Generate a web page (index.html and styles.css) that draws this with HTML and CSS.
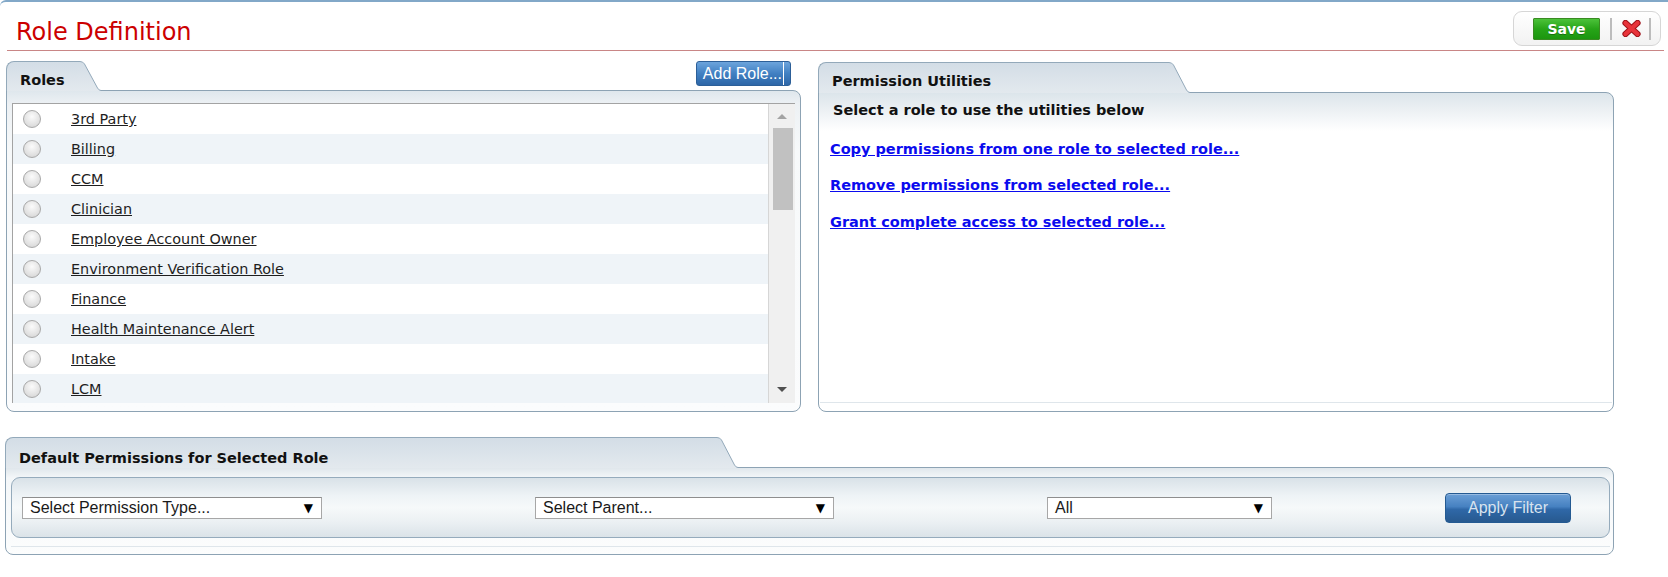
FILE: index.html
```html
<!DOCTYPE html>
<html lang="en">
<head>
<meta charset="utf-8">
<title>Role Definition</title>
<link rel="stylesheet" href="styles.css">
</head>
<body>
<div class="page">
  <header class="header">
    <h1 class="title">Role Definition</h1>
    <div class="toolbar">
      <button class="btn-save" type="button">Save</button>
      <span class="tool-sep"></span>
      <button class="btn-cancel" type="button" aria-label="Cancel">
        <svg width="19" height="17" viewBox="0 0 19 17">
          <path d="M3.5 3 L15.5 14 M15.5 3 L3.5 14" stroke="#9e1219" stroke-width="6.2" stroke-linecap="round" fill="none"/>
          <path d="M3.5 3 L15.5 14 M15.5 3 L3.5 14" stroke="#e8343b" stroke-width="4.2" stroke-linecap="round" fill="none"/>
        </svg>
      </button>
      <span class="tool-sep tool-sep-last"></span>
    </div>
  </header>

  <div class="top-row">
    <section class="panel panel-roles">
      <div class="panel-head">
        <div class="tab tab-roles">
          <span class="tab-label">Roles</span>
          <svg class="tab-slant" width="24" height="30" viewBox="0 0 24 30">
            <defs><linearGradient id="tg1" x1="0" y1="0" x2="0" y2="1"><stop offset="0" stop-color="#d3dde6"/><stop offset="1" stop-color="#e3e9ee"/></linearGradient></defs>
            <path d="M0 30 L0 0.5 L3 0.5 Q6 0.5 7.5 3 L20.5 27 Q22 29.5 24 29.5 L24 30 Z" fill="url(#tg1)"/>
            <path d="M0 0.5 L3 0.5 Q6 0.5 7.5 3 L20.5 27 Q22 29.5 24 29.5" fill="none" stroke="#93a9ba" stroke-width="1"/>
          </svg>
        </div>
        <button class="btn-add" type="button">Add Role...</button>
      </div>
      <div class="panel-body roles-body">
        <div class="listbox">
          <ul class="role-list">
            <li class="role"><span class="radio"></span><a class="role-link" href="#">3rd Party</a></li>
            <li class="role"><span class="radio"></span><a class="role-link" href="#">Billing</a></li>
            <li class="role"><span class="radio"></span><a class="role-link" href="#">CCM</a></li>
            <li class="role"><span class="radio"></span><a class="role-link" href="#">Clinician</a></li>
            <li class="role"><span class="radio"></span><a class="role-link" href="#">Employee Account Owner</a></li>
            <li class="role"><span class="radio"></span><a class="role-link" href="#">Environment Verification Role</a></li>
            <li class="role"><span class="radio"></span><a class="role-link" href="#">Finance</a></li>
            <li class="role"><span class="radio"></span><a class="role-link" href="#">Health Maintenance Alert</a></li>
            <li class="role"><span class="radio"></span><a class="role-link" href="#">Intake</a></li>
            <li class="role"><span class="radio"></span><a class="role-link" href="#">LCM</a></li>
          </ul>
          <div class="scrollbar">
            <span class="sb-btn sb-btn-up"></span>
            <span class="sb-thumb"></span>
            <span class="sb-btn sb-btn-down"></span>
          </div>
        </div>
      </div>
    </section>

    <section class="panel panel-perms">
      <div class="panel-head">
        <div class="tab tab-perms">
          <span class="tab-label">Permission Utilities</span>
          <svg class="tab-slant" width="24" height="31" viewBox="0 0 24 31">
            <defs><linearGradient id="tg2" x1="0" y1="0" x2="0" y2="1"><stop offset="0" stop-color="#d3dde6"/><stop offset="1" stop-color="#e3e9ee"/></linearGradient></defs>
            <path d="M0 31 L0 0.5 L3 0.5 Q6 0.5 7.5 3 L20.5 28 Q22 30.5 24 30.5 L24 31 Z" fill="url(#tg2)"/>
            <path d="M0 0.5 L3 0.5 Q6 0.5 7.5 3 L20.5 28 Q22 30.5 24 30.5" fill="none" stroke="#93a9ba" stroke-width="1"/>
          </svg>
        </div>
      </div>
      <div class="panel-body perms-body">
        <p class="perm-hint">Select a role to use the utilities below</p>
        <div class="perm-links">
          <a class="perm-link" href="#">Copy permissions from one role to selected role...</a>
          <a class="perm-link" href="#">Remove permissions from selected role...</a>
          <a class="perm-link" href="#">Grant complete access to selected role...</a>
        </div>
        <div class="panel-foot"></div>
      </div>
    </section>
  </div>

  <section class="panel panel-defaults">
    <div class="panel-head">
      <div class="tab tab-defaults">
        <span class="tab-label">Default Permissions for Selected Role</span>
        <svg class="tab-slant" width="24" height="31" viewBox="0 0 24 31">
          <defs><linearGradient id="tg3" x1="0" y1="0" x2="0" y2="1"><stop offset="0" stop-color="#d3dde6"/><stop offset="1" stop-color="#e3e9ee"/></linearGradient></defs>
          <path d="M0 31 L0 0.5 L3 0.5 Q6 0.5 7.5 3 L20.5 28 Q22 30.5 24 30.5 L24 31 Z" fill="url(#tg3)"/>
          <path d="M0 0.5 L3 0.5 Q6 0.5 7.5 3 L20.5 28 Q22 30.5 24 30.5" fill="none" stroke="#93a9ba" stroke-width="1"/>
        </svg>
      </div>
    </div>
    <div class="panel-body defaults-body">
      <div class="filter-bar">
        <div class="select select-type"><span>Select Permission Type...</span><span class="select-arrow">▼</span></div>
        <div class="select select-parent"><span>Select Parent...</span><span class="select-arrow">▼</span></div>
        <div class="select select-all"><span>All</span><span class="select-arrow">▼</span></div>
        <button class="btn-apply" type="button">Apply Filter</button>
      </div>
      <div class="defaults-foot"></div>
    </div>
  </section>
</div>
</body>
</html>
```

FILE: styles.css
```css
html, body {
  margin: 0;
  padding: 0;
  background: #ffffff;
}

body {
  font-family: "DejaVu Sans", Verdana, sans-serif;
  color: #1a1a1a;
}

button {
  font: inherit;
  cursor: pointer;
}

.page {
  border-top: 2px solid #82a8c8;
  border-top-left-radius: 6px;
  min-height: 575px;
}

/* ---------- header ---------- */
.header {
  display: flex;
  justify-content: space-between;
  align-items: flex-start;
  height: 48px;
  margin: 0 4px 0 7px;
  border-bottom: 1px solid #c98686;
}

.title {
  margin: 0;
  padding: 15px 0 0 9px;
  font: normal 24px/30px "DejaVu Sans", Verdana, sans-serif;
  color: #cc0000;
}

.toolbar {
  margin: 9px 3px 0 0;
  width: 148px;
  height: 35px;
  box-sizing: border-box;
  border: 1px solid #d6d6d6;
  border-radius: 9px;
  background: linear-gradient(#ffffff, #f2f2f2);
  display: flex;
  align-items: center;
  padding-left: 19px;
}

.btn-save {
  width: 67px;
  height: 22px;
  padding: 0;
  border: 1px solid #3a8a22;
  border-radius: 1px;
  background: linear-gradient(#4cc23a, #27a418 50%, #1c960f);
  color: #ffffff;
  font: bold 14px/20px "DejaVu Sans", Verdana, sans-serif;
  text-shadow: 0 1px 0 rgba(0, 0, 0, 0.3);
}

.tool-sep {
  width: 2px;
  height: 22px;
  margin-left: 10px;
  background: #bcbcbc;
}

.tool-sep-last {
  margin-left: 8px;
}

.btn-cancel {
  margin-left: 10px;
  width: 19px;
  height: 17px;
  padding: 0;
  border: 0;
  background: none;
  display: flex;
}

/* ---------- panels ---------- */
.top-row {
  display: flex;
  align-items: flex-start;
  gap: 17px;
  margin-top: 10px;
  padding-left: 6px;
}

.panel-roles { width: 795px; }
.panel-perms { width: 796px; }
.panel-defaults { width: 1609px; margin: 25px 0 0 5px; }

.panel-head {
  display: flex;
  align-items: flex-start;
  height: 29px;
}

.panel-perms .panel-head {
  height: 30px;
  margin-top: 1px;
}

.panel-defaults .panel-head {
  height: 30px;
}

.tab {
  display: flex;
  position: relative;
  z-index: 1;
  height: 30px;
}

.tab-perms, .tab-defaults {
  height: 31px;
}

.tab-label {
  box-sizing: border-box;
  height: 100%;
  border: 1px solid #93a9ba;
  border-right: 0;
  border-bottom: 0;
  border-top-left-radius: 8px;
  background: linear-gradient(#d3dde6, #e3e9ee);
  padding: 8px 0 0 13px;
  font: bold 14.5px/20px "DejaVu Sans", Verdana, sans-serif;
  color: #111111;
  white-space: nowrap;
}

.tab-roles .tab-label { width: 71px; }
.tab-perms .tab-label { width: 348px; }
.tab-defaults .tab-label { width: 709px; padding-top: 10px; }

.tab-slant {
  display: block;
  flex: none;
}

.btn-add {
  margin-left: auto;
  margin-right: 10px;
  height: 25px;
  display: flex;
  align-items: center;
  padding: 0 6px;
  border: 1px solid #2c5f98;
  border-radius: 3px;
  background: linear-gradient(#6ca4dc, #4180c2 50%, #2d66a7);
  color: #ffffff;
  font: 16px/20px "Liberation Sans", Arial, sans-serif;
}

.btn-add::after {
  content: "";
  align-self: stretch;
  width: 1px;
  margin-left: 1px;
  background: #ffffff;
}

.panel-body {
  box-sizing: border-box;
  border: 1px solid #8da3b4;
  border-radius: 0 8px 8px 8px;
}

/* roles list */
.roles-body {
  height: 322px;
  padding: 12px 5px 0 5px;
  background: linear-gradient(#dfe7ed, #edf1f4 13px, #f7f9fa 60px, #fbfcfd);
}

.listbox {
  display: flex;
  height: 300px;
  box-sizing: border-box;
  border-top: 1px solid #a3a3a3;
  border-left: 1px solid #a3a3a3;
  background: #ffffff;
}

.role-list {
  list-style: none;
  margin: 0;
  padding: 0;
  flex: 1;
  overflow: hidden;
  border-right: 1px solid #d6d6d6;
}

.role {
  display: flex;
  align-items: center;
  height: 30px;
  padding-left: 10px;
}

.role:nth-child(even) {
  background: #eff4f8;
}

.radio {
  flex: none;
  width: 18px;
  height: 18px;
  box-sizing: border-box;
  border: 1px solid #a8a8a8;
  border-radius: 50%;
  background: radial-gradient(circle at 50% 35%, #fbfbfb, #e0e0e0 65%, #cfcfcf);
  margin-right: 30px;
}

.role-link {
  font: 14.4px/30px "DejaVu Sans", Verdana, sans-serif;
  color: #1e1e1e;
  text-decoration: underline;
}

.scrollbar {
  flex: none;
  width: 26px;
  background: #f0f0f0;
  display: flex;
  flex-direction: column;
}

.sb-btn {
  display: flex;
  align-items: center;
  justify-content: center;
}

.sb-btn-up {
  height: 24px;
}

.sb-btn-up::before {
  content: "";
  border-left: 5px solid transparent;
  border-right: 5px solid transparent;
  border-bottom: 5px solid #a3a3a3;
}

.sb-thumb {
  align-self: flex-end;
  width: 20px;
  height: 82px;
  margin-right: 2px;
  background: #c1c1c1;
}

.sb-btn-down {
  margin-top: auto;
  height: 28px;
}

.sb-btn-down::before {
  content: "";
  border-left: 5px solid transparent;
  border-right: 5px solid transparent;
  border-top: 5px solid #505050;
}

/* permission utilities */
.perms-body {
  height: 320px;
  display: flex;
  flex-direction: column;
  background: linear-gradient(#dce5eb, #edf1f4 18px, #ffffff 38px);
}

.perm-hint {
  margin: 0;
  padding: 7px 0 0 14px;
  font: bold 14.5px/20px "DejaVu Sans", Verdana, sans-serif;
  color: #111111;
}

.perm-links {
  display: flex;
  flex-direction: column;
  align-items: flex-start;
  padding-left: 11px;
}

.perm-link {
  font: bold 14.5px/20px "DejaVu Sans", Verdana, sans-serif;
  color: #0b0bee;
  text-decoration: underline;
}

.perm-link:nth-child(1) { margin-top: 19px; }
.perm-link:nth-child(2) { margin-top: 16px; }
.perm-link:nth-child(3) { margin-top: 17px; }

.panel-foot {
  margin: auto 1px 0;
  height: 8px;
  border-top: 1px solid #dfe6eb;
}

/* default permissions */
.defaults-body {
  height: 88px;
  padding: 9px 3px 0 5px;
  background: linear-gradient(#e0e7ec, #f4f7f9 10px, #fcfdfd);
}

.filter-bar {
  height: 61px;
  box-sizing: border-box;
  border: 1px solid #95abbc;
  border-radius: 9px;
  background: linear-gradient(#d9e2e8, #eef3f6 30%, #f6f9fa 50%, #ebf0f3 75%, #dbe3e8);
  display: flex;
  align-items: center;
  padding-left: 10px;
}

.defaults-foot {
  margin-top: 8px;
  border-top: 1px solid #dfe6eb;
}

.select {
  flex: none;
  box-sizing: border-box;
  height: 22px;
  border: 1px solid #a7a7a7;
  border-top-color: #8e8e8e;
  background: #ffffff;
  display: flex;
  align-items: center;
  justify-content: space-between;
  padding: 0 8px 0 7px;
  font: 16px/20px "Liberation Sans", Arial, sans-serif;
  color: #1a1a1a;
}

.select-arrow {
  font: 12px/20px "DejaVu Sans", sans-serif;
  color: #000000;
}

.select-type { width: 300px; }
.select-parent { width: 299px; margin-left: 213px; }
.select-all { width: 225px; margin-left: 213px; }

.btn-apply {
  flex: none;
  margin-left: 173px;
  width: 126px;
  height: 30px;
  padding: 0;
  border: 1px solid #245a92;
  border-radius: 4px;
  background: linear-gradient(#6b9fd6, #4681c1 45%, #2f68a8 55%, #27598f);
  box-shadow: inset 0 1px 0 rgba(255, 255, 255, 0.3);
  color: #d9e3ee;
  font: 16px/20px "Liberation Sans", Arial, sans-serif;
}
```
